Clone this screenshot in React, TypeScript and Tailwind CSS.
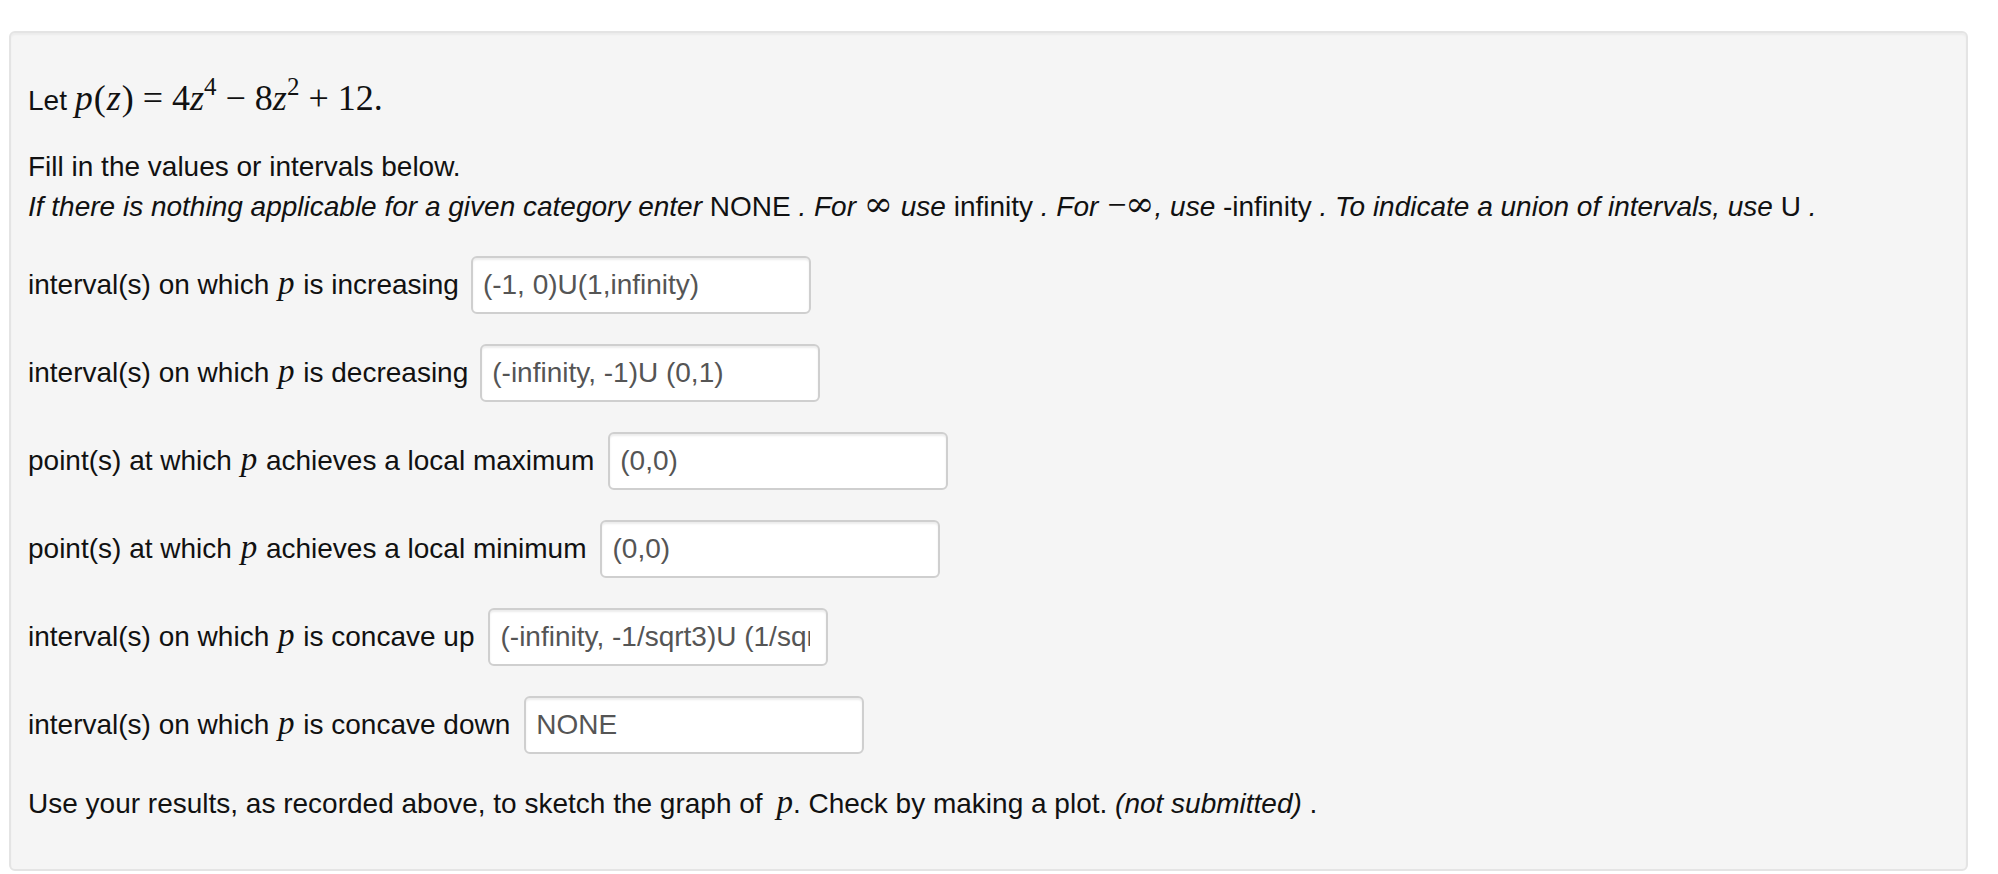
import React from "react";

function Mi({ children, cls = "" }: { children: React.ReactNode; cls?: string }) {
  return (
    <span className={"font-['Liberation_Serif',serif] italic leading-none " + cls}>
      {children}
    </span>
  );
}

function Mr({ children, cls = "" }: { children: React.ReactNode; cls?: string }) {
  return (
    <span className={"font-['Liberation_Serif',serif] text-[36px] leading-none " + cls}>
      {children}
    </span>
  );
}

function Sup({ children }: { children: React.ReactNode }) {
  return (
    <span className="font-['Liberation_Serif',serif] text-[25px] leading-none align-[15px]">
      {children}
    </span>
  );
}

function Op({ children }: { children: React.ReactNode }) {
  return (
    <span className="font-['Liberation_Serif',serif] text-[36px] leading-none mx-[9px]">
      {children}
    </span>
  );
}

function Inf() {
  return (
    <span className="font-['DejaVu_Serif',serif] text-[35px] leading-none">∞</span>
  );
}

const rows: { pre: string; post: string; value: string }[] = [
  { pre: "interval(s) on which ", post: " is increasing", value: "(-1, 0)U(1,infinity)" },
  { pre: "interval(s) on which ", post: " is decreasing", value: "(-infinity, -1)U (0,1)" },
  { pre: "point(s) at which ", post: " achieves a local maximum", value: "(0,0)" },
  { pre: "point(s) at which ", post: " achieves a local minimum", value: "(0,0)" },
  {
    pre: "interval(s) on which ",
    post: " is concave up",
    value: "(-infinity, -1/sqrt3)U (1/sqrt3, infinity)",
  },
  { pre: "interval(s) on which ", post: " is concave down", value: "NONE" },
];

export default function App() {
  return (
    <div className="min-h-screen bg-white pt-[31px] pl-[9px] pr-[30px] pb-[3px] font-['Liberation_Sans',Arial,sans-serif] text-[28px] leading-[40px] text-[#111]">
      <div className="rounded-[6px] border-2 border-[#e4e4e4] bg-[#f5f5f5] px-[17px] pt-[41px] pb-[45px] shadow-[inset_0_2px_2px_rgba(0,0,0,0.04)]">
        <div className="h-[40px] whitespace-nowrap">
          Let <Mi cls="text-[36px]">p</Mi>
          <Mr cls="ml-[1px]">(</Mr>
          <Mi cls="text-[36px] mx-[1px]">z</Mi>
          <Mr>)</Mr>
          <Op>=</Op>
          <Mr>4</Mr>
          <Mi cls="text-[36px]">z</Mi>
          <Sup>4</Sup>
          <Op>−</Op>
          <Mr>8</Mr>
          <Mi cls="text-[36px]">z</Mi>
          <Sup>2</Sup>
          <Op>+</Op>
          <Mr>12.</Mr>
        </div>

        <div className="mt-[33px] h-[40px] whitespace-nowrap">
          Fill in the values or intervals below.
        </div>
        <div className="h-[40px] whitespace-nowrap">
          <i>If there is nothing applicable for a given category enter</i> NONE{" "}
          <i>. For </i>
          <Inf />
          <i> use</i> infinity <i>. For </i>
          <span className="font-['Liberation_Serif',serif] text-[34px] leading-none ml-[1px] mr-[-1px]">−</span>
          <Inf />
          <i>, use</i> -infinity <i>. To indicate a union of intervals, use</i> U <i>.</i>
        </div>

        <div className="mt-[29px] flex flex-col gap-[30px]">
          {rows.map((r, i) => (
            <div key={i} className="flex h-[58px] items-center whitespace-nowrap">
              <span>
                {r.pre}
                <Mi cls="text-[33px] mx-[1px]">p</Mi>
                {r.post}
              </span>
              <input
                readOnly
                value={r.value}
                className={
                  (i < 2 ? "ml-[12px] " : "ml-[14px] ") +
                  "h-[58px] w-[340px] rounded-[6px] border-2 border-[#cfcfcf] bg-white pl-[10px] pr-[16px] font-['Liberation_Sans',Arial,sans-serif] text-[28px] text-[#555] outline-none shadow-[inset_0_2px_2px_rgba(0,0,0,0.075)]"
                }
              />
            </div>
          ))}
        </div>

        <div className="mt-[30px] h-[40px] whitespace-nowrap">
          Use your results, as recorded above, to sketch the graph of{" "}
          <Mi cls="text-[33px] ml-[6px]">p</Mi>. Check by making a plot.{" "}
          <i>(not submitted)</i> .
        </div>
      </div>
    </div>
  );
}
